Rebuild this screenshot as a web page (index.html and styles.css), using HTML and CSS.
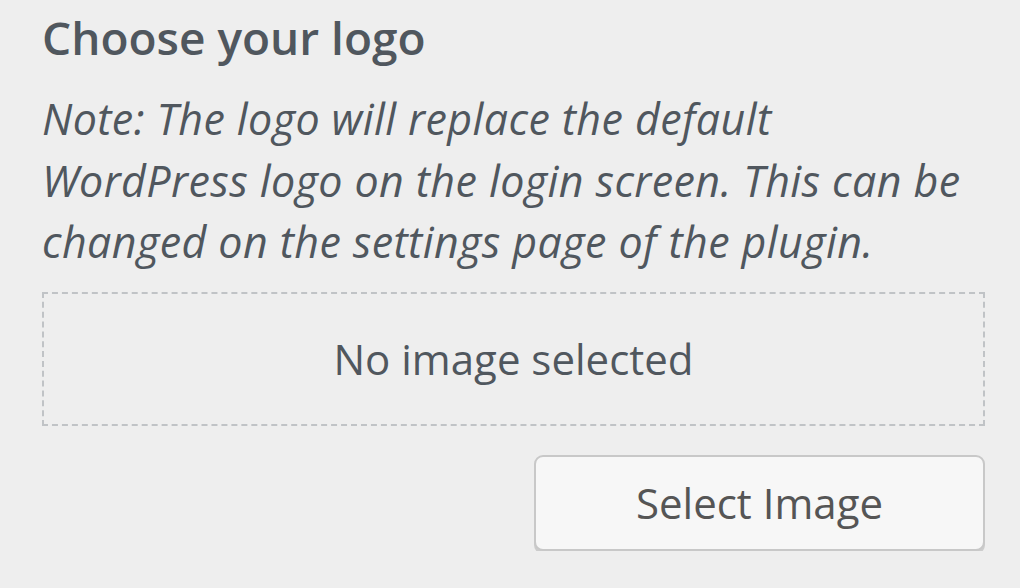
FILE: index.html
```html
<!DOCTYPE html>
<html>
<head>
<meta charset="utf-8">
<link rel="stylesheet" href="styles.css">
</head>
<body>
<div class="control">
  <h2 class="title">Choose your logo</h2>
  <p class="desc">Note: The logo will replace the default<br>WordPress logo on the login screen. This can be<br>changed on the settings page of the plugin.</p>
  <div class="placeholder">No image selected</div>
  <div class="actions">
    <button class="btn">Select Image</button>
  </div>
</div>
</body>
</html>
```
FILE: styles.css
```css
html, body {
  margin: 0;
  padding: 0;
  background: #eeeeee;
}
body {
  font-family: "Open Sans", "Noto Sans", sans-serif;
  color: #50575e;
}
.control {
  padding: 6px 35px 0 42px;
}
.title {
  margin: 0;
  font-size: 46px;
  font-weight: 600;
  line-height: 62px;
  color: #50575e;
}
.desc {
  margin: 20px 0 0 0;
  font-size: 43px;
  font-style: italic;
  letter-spacing: 0.4px;
  line-height: 61.5px;
  color: #50575e;
}
.placeholder {
  box-sizing: border-box;
  margin-top: 19px;
  height: 134px;
  border: 2px dashed #c0c3c6;
  display: flex;
  align-items: center;
  justify-content: center;
  font-size: 42px;
  color: #50575e;
}
.actions {
  display: flex;
  justify-content: flex-end;
  margin-top: 29px;
}
.btn {
  box-sizing: border-box;
  width: 451px;
  height: 96px;
  background: #f7f7f7;
  border: 2px solid #c8c8c8;
  border-radius: 9px;
  box-shadow: 0 3px 0 #cccccc;
  font-family: "Open Sans", "Noto Sans", sans-serif;
  font-size: 42px;
  color: #555555;
  padding: 0;
}
```
